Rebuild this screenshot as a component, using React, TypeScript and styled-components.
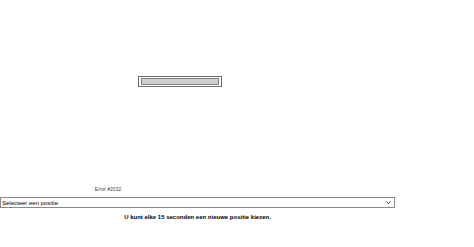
import styled, { createGlobalStyle } from 'styled-components'

const Global = createGlobalStyle`
  html, body {
    margin: 0;
    padding: 0;
    background: #ffffff;
    font-family: "Liberation Sans", Arial, sans-serif;
  }
`

const Page = styled.div`
  width: 395px;
`

const Stage = styled.div`
  height: 183px;
  display: flex;
  justify-content: center;
  align-items: flex-start;
  padding: 76px 35px 0 0;
  box-sizing: border-box;
`

const BarFrame = styled.div`
  width: 78px;
  height: 7px;
  border: 1px solid #707070;
  padding: 1px 2px;
  display: flex;
`

const BarFill = styled.div`
  flex: 1;
  background: #cfcfcf;
  border: 1px solid #808080;
`

const ErrorRow = styled.div`
  width: 216px;
  text-align: center;
  font-size: 5px;
  color: #444;
  height: 14px;
  line-height: 12px;
`

const SelectWrap = styled.div`
  position: relative;
  width: 395px;
`

const Select = styled.select`
  display: block;
  width: 100%;
  height: 11px;
  margin: 0;
  padding: 0 0 0 1px;
  font-family: "Liberation Sans", Arial, sans-serif;
  font-size: 6px;
  border: 1px solid #8a8a8a;
  border-radius: 0;
  background: #fff;
  color: #000;
  box-sizing: border-box;
  appearance: none;
  -webkit-appearance: none;
`

const Arrow = styled.svg`
  position: absolute;
  right: 4px;
  top: 4px;
  width: 5px;
  height: 3px;
  pointer-events: none;
`

const Notice = styled.p`
  margin: 6px 0 0;
  text-align: center;
  font-size: 6px;
  font-weight: bold;
  color: #000;
`

export default function App() {
  return (
    <Page>
      <Global />
      <Stage>
        <BarFrame>
          <BarFill />
        </BarFrame>
      </Stage>
      <ErrorRow>Error #2032</ErrorRow>
      <SelectWrap>
        <Select defaultValue="">
          <option value="">Selecteer een positie</option>
        </Select>
        <Arrow viewBox="0 0 5 3">
          <path d="M0.5 0.5 L2.5 2.5 L4.5 0.5" fill="none" stroke="#333" strokeWidth="1" />
        </Arrow>
      </SelectWrap>
      <Notice>U kunt elke 15 seconden een nieuwe positie kiezen.</Notice>
    </Page>
  )
}
